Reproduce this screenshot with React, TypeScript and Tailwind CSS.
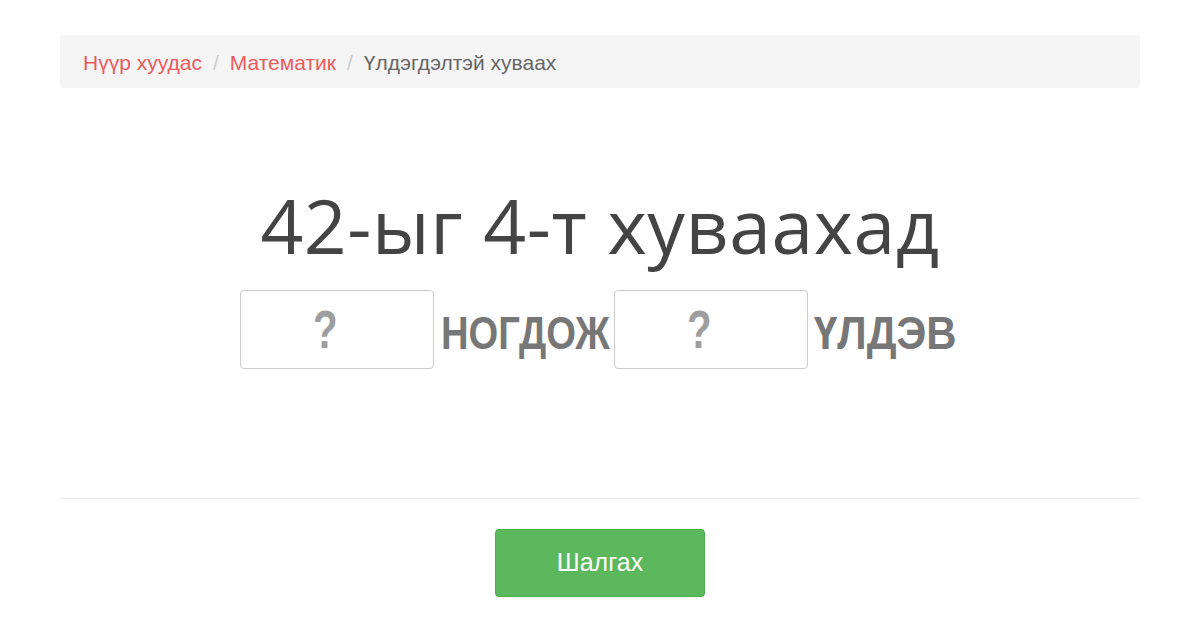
function AnswerBox() {
  return (
    <div className="flex h-[79px] w-[194px] items-center justify-center rounded-[4px] border border-[#ccc] pr-[24px] text-[53px] font-bold text-[#9e9e9e]">
      <span className="inline-block scale-x-[0.76]">?</span>
    </div>
  )
}

export default function App() {
  return (
    <div className="min-h-[630px] w-full bg-white px-[60px] pt-[35px] font-['Liberation_Sans',Arial,sans-serif]">
      <nav className="flex h-[53px] items-center rounded-[4px] bg-[#f5f5f5] px-[23px] pt-[2px] text-[21px]">
        <a className="text-[#ec5b5b]">Нүүр хуудас</a>
        <span className="px-[11px] text-[#ccc]">/</span>
        <a className="text-[#ec5b5b]">Математик</a>
        <span className="px-[11px] text-[#ccc]">/</span>
        <span className="text-[#666]">Үлдэгдэлтэй хуваах</span>
      </nav>

      <div className="flex h-[411px] flex-col items-center border-b border-[#eee] pt-[100px]">
        <h1 className="font-['Open_Sans',sans-serif] text-[75px] leading-none tracking-[0.6px] text-[#444]">
          42-ыг 4-т хуваахад
        </h1>
        <div className="mt-[27px] flex items-center pr-[4px] text-[46px] font-bold uppercase text-[#777]">
          <AnswerBox />
          <span className="ml-[7px] mr-[5px] inline-block w-[168px] whitespace-nowrap pt-[8px]">
            <span className="inline-block origin-left scale-x-[0.83]">ногдож</span>
          </span>
          <AnswerBox />
          <span className="ml-[6px] inline-block w-[142px] whitespace-nowrap pt-[8px]">
            <span className="inline-block origin-left scale-x-[0.91]">үлдэв</span>
          </span>
        </div>
      </div>

      <div className="flex justify-center pt-[30px]">
        <button
          type="button"
          className="h-[68px] w-[210px] rounded-[4px] border border-[#4cae4c] bg-[#5cb85c] text-[25px] text-white"
        >
          Шалгах
        </button>
      </div>
    </div>
  )
}
